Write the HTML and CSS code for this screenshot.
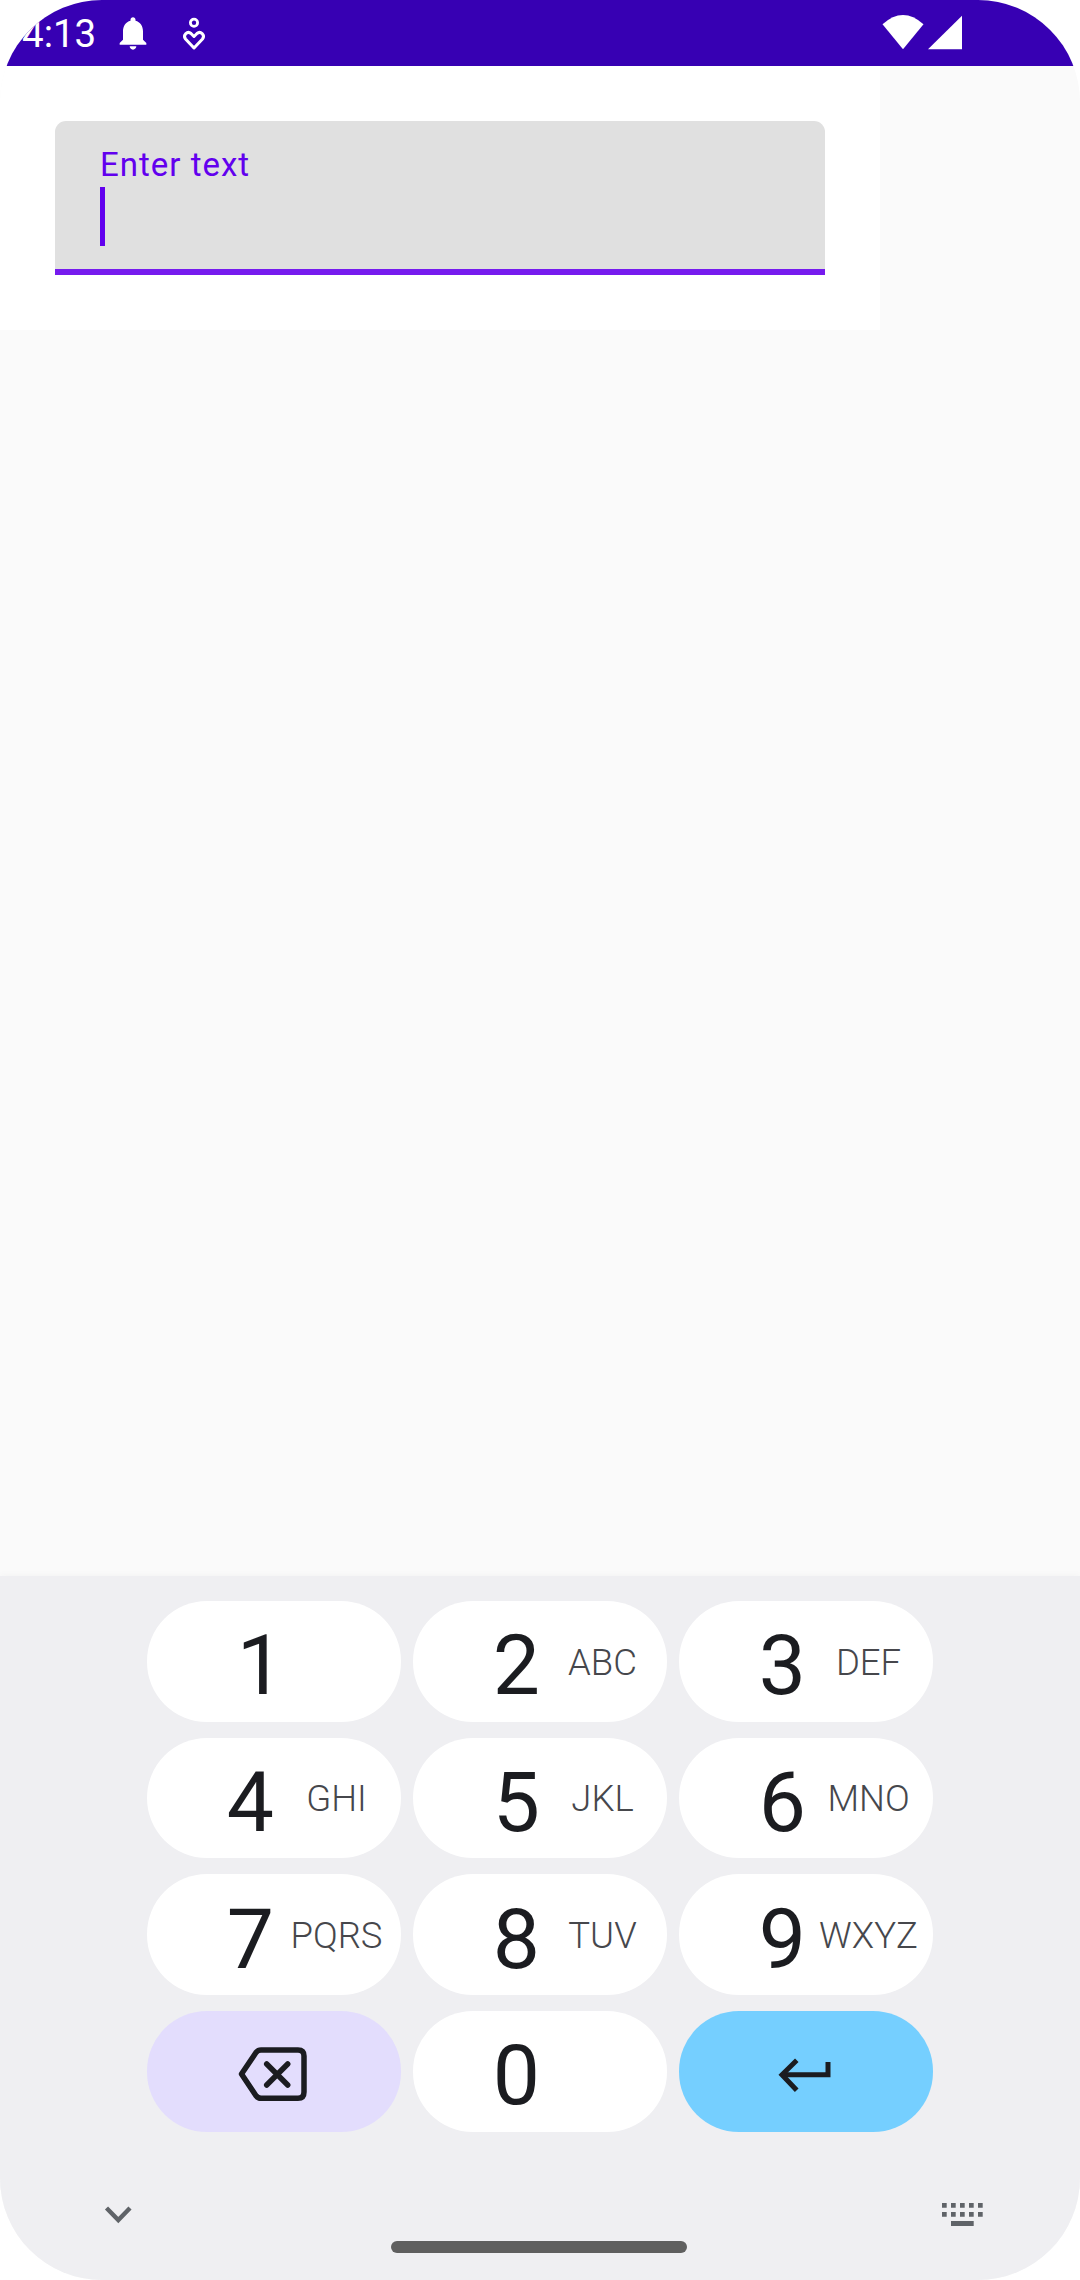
FILE: index.html
```html
<!DOCTYPE html>
<html lang="en">
<head>
    <meta charset="UTF-8">
    <meta name="viewport" content="width=device-width, initial-scale=1.0">
    <title>Enter text</title>
    <link rel="stylesheet" href="styles.css">
</head>
<body>
    <div class="screen">
        <div class="status-bar">
            <span class="clock">4:13</span>
            <svg class="icon-bell" width="40" height="40" viewBox="0 0 24 24"><path fill="#fff" d="M12 22c1.1 0 2-.9 2-2h-4c0 1.1.9 2 2 2zm6-6v-5c0-3.07-1.64-5.64-4.5-6.32V4c0-.83-.67-1.5-1.5-1.5s-1.5.67-1.5 1.5v.68C7.63 5.36 6 7.92 6 11v5l-2 2v1h16v-1l-2-2z"/></svg>
            <svg class="icon-heart" width="26" height="34" viewBox="0 0 26 34"><circle cx="13" cy="5.8" r="3.6" fill="none" stroke="#fff" stroke-width="2.8"/><path fill="none" stroke="#fff" stroke-width="3" stroke-linejoin="round" d="M13 31 4.500 22C1.500 18 6.500 13.500 10 16.500L13 19.500 16 16.500C19.500 13.500 24.500 18 21.500 22Z"/></svg>
            <div class="status-right">
                <svg width="42" height="36" viewBox="0 0 42 36"><path fill="#fff" d="M21 34.3.5 9.3Q21-9.3 41.5 9.3Z"/></svg>
                <svg width="34" height="36" viewBox="0 0 34 36"><path fill="#fff" d="M34 .7V34.3H0Z"/></svg>
            </div>
        </div>

        <div class="content">
            <div class="panel">
                <div class="text-field">
                    <div class="field-label">Enter text</div>
                    <div class="caret"></div>
                </div>
            </div>
        </div>

        <div class="keyboard">
            <div class="keypad">
                <div class="key"><span class="digit digit-one">1</span></div>
                <div class="key"><span class="digit">2</span><span class="letters">ABC</span></div>
                <div class="key"><span class="digit">3</span><span class="letters">DEF</span></div>
                <div class="key"><span class="digit">4</span><span class="letters">GHI</span></div>
                <div class="key"><span class="digit">5</span><span class="letters">JKL</span></div>
                <div class="key"><span class="digit">6</span><span class="letters">MNO</span></div>
                <div class="key"><span class="digit">7</span><span class="letters">PQRS</span></div>
                <div class="key"><span class="digit">8</span><span class="letters">TUV</span></div>
                <div class="key"><span class="digit">9</span><span class="letters">WXYZ</span></div>
                <div class="key key-icon key-delete">
                    <svg class="icon-delete" width="100" height="80" viewBox="0 0 100 80" fill="none" stroke="#1b1c20" stroke-width="5.5" stroke-linecap="round" stroke-linejoin="round"><path d="M16.5 39 31 17.5Q33 15 36 15H73Q79 15 79 21V57Q79 63.3 73 63.3H36Q33 63.3 31 60.8Z"/><path d="M41.7 29 62.7 50M62.7 29 41.7 50"/></svg>
                </div>
                <div class="key"><span class="digit">0</span></div>
                <div class="key key-icon key-enter">
                    <svg class="icon-enter" width="80" height="65" viewBox="0 0 80 65" fill="none" stroke="#1b1c20" stroke-width="5"><path d="M63 20V32.7H17"/><path stroke-linecap="square" d="M30 20 17 32.7 30 46.5"/></svg>
                </div>
            </div>
            <div class="kb-tools">
                <svg width="50" height="40" viewBox="0 0 50 40"><path fill="none" stroke="#5f6368" stroke-width="4.4" d="M11.5 13 23.3 25 35 13"/></svg>
                <svg width="65" height="40" viewBox="0 0 65 40" fill="#5f6368">
                    <path d="M12 8h4.700v4.700H12zM21 8h4.700v4.700H21zM30 8h4.700v4.700H30zM39 8h4.700v4.700H39zM48 8h4.700v4.700H48z"/>
                    <path d="M12 17h4.700v4.700H12zM21 17h4.700v4.700H21zM30 17h4.700v4.700H30zM39 17h4.700v4.700H39zM48 17h4.700v4.700H48z"/>
                    <path d="M21 26h22.700v5H21z"/>
                </svg>
            </div>
            <div class="home-pill"></div>
        </div>
    </div>
</body>
</html>
```

FILE: styles.css
```css
* {
    margin: 0;
    padding: 0;
    box-sizing: border-box;
}

body {
    background: #ffffff;
    font-family: 'Roboto', sans-serif;
}

.screen {
    width: 1080px;
    height: 2280px;
    border-radius: 102px;
    overflow: hidden;
    display: flex;
    flex-direction: column;
    background: #fafafa;
}

.status-bar {
    height: 66px;
    flex: none;
    display: flex;
    align-items: center;
    padding: 0 118px 0 22px;
    background: #3700b3;
    color: #ffffff;
}

.clock {
    font-size: 38.5px;
}

.icon-bell {
    margin-left: 17px;
}

.icon-heart {
    margin-left: 28px;
    margin-top: 2px;
}

.status-right {
    margin-left: auto;
    display: flex;
    gap: 4px;
}

.content {
    flex: 1;
}

.panel {
    width: 880px;
    height: 264px;
    padding: 55px;
    background: #ffffff;
}

.text-field {
    height: 154px;
    padding: 25px 45px 0;
    background: #e0e0e0;
    border-radius: 11px 11px 0 0;
    border-bottom: 6px solid #761bee;
}

.field-label {
    font-size: 33px;
    line-height: 38px;
    letter-spacing: 1px;
    color: #6200ee;
}

.caret {
    width: 5px;
    height: 59px;
    margin-top: 3px;
    background: #6200ee;
}

.keyboard {
    height: 704px;
    flex: none;
    padding-top: 25px;
    background: #efeff2;
    box-shadow: 0 -2px 6px rgba(0, 0, 0, 0.025);
}

.keypad {
    width: 786px;
    margin: 0 auto;
    display: grid;
    grid-template-columns: repeat(3, 254px);
    grid-auto-rows: 120.67px;
    column-gap: 12px;
    row-gap: 16px;
}

.key {
    display: grid;
    grid-template-columns: 127px 1fr;
    align-items: center;
    background: #ffffff;
    border-radius: 60px;
}

.digit {
    padding-top: 10px;
    font-size: 84px;
    line-height: 1;
    text-align: right;
    color: #1b1c20;
}

.digit-one {
    transform: translateX(10px);
}

.letters {
    padding: 2px 2px 0 0;
    font-size: 36.5px;
    font-weight: 300;
    text-align: center;
    color: #46474c;
}

.key-icon {
    display: flex;
    align-items: center;
    justify-content: center;
}

.key-delete {
    background: #e3ddfd;
}

.key-enter {
    background: #75cfff;
}

.icon-delete {
    margin: 7px 0 0 2px;
}

.icon-enter {
    margin: 6px 3px 0 0;
}

.kb-tools {
    display: flex;
    justify-content: space-between;
    margin-top: 63px;
    padding: 0 85px 0 95px;
}

.home-pill {
    width: 296px;
    height: 12px;
    margin: 6px 393px 0 391px;
    background: #5f5f5f;
    border-radius: 6px;
}
```
